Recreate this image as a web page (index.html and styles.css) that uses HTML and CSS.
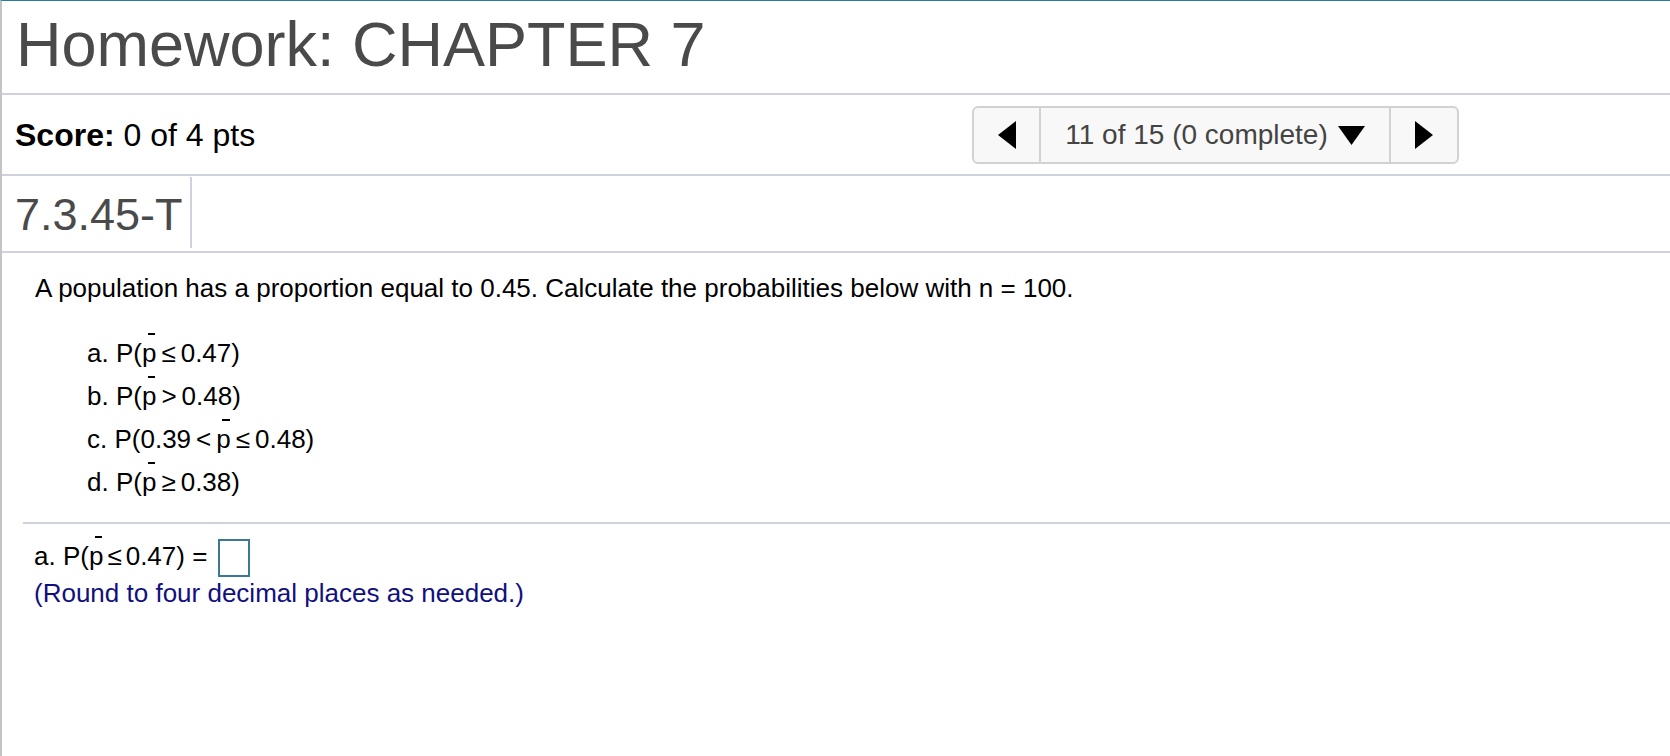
FILE: index.html
```html
<!DOCTYPE html>
<html lang="en">
<head>
    <meta charset="UTF-8">
    <meta name="viewport" content="width=device-width, initial-scale=1.0">
    <title>Homework: CHAPTER 7</title>
    <link rel="stylesheet" href="styles.css">
</head>
<body>
    <div class="page">
        <header class="title-bar">
            <h1>Homework: CHAPTER 7</h1>
        </header>

        <div class="score-row">
            <div class="score"><b>Score:</b> 0 of 4 pts</div>
            <div class="nav">
                <div class="nav-btn prev">
                    <svg width="18" height="28" viewBox="0 0 18 28"><polygon points="18,0 18,28 0,14" fill="#000"/></svg>
                </div>
                <div class="nav-mid">
                    <span>11 of 15 (0 complete)</span>
                    <svg width="27" height="19" viewBox="0 0 27 19"><polygon points="0,0 27,0 13.5,19" fill="#000"/></svg>
                </div>
                <div class="nav-btn next">
                    <svg width="18" height="28" viewBox="0 0 18 28"><polygon points="0,0 18,14 0,28" fill="#000"/></svg>
                </div>
            </div>
        </div>

        <div class="qid-row">
            <div class="qid">7.3.45-T</div>
        </div>

        <div class="question">
            <p class="prompt">A population has a proportion equal to 0.45. Calculate the probabilities below with n = 100.</p>
            <ul class="parts">
                <li>a. P(<span class="pbar">p</span><span class="op">≤</span>0.47)</li>
                <li>b. P(<span class="pbar">p</span><span class="op">&gt;</span>0.48)</li>
                <li>c. P(0.39<span class="op">&lt;</span><span class="pbar">p</span><span class="op">≤</span>0.48)</li>
                <li>d. P(<span class="pbar">p</span><span class="op">≥</span>0.38)</li>
            </ul>
        </div>

        <div class="answer">
            <div class="answer-line">a. P(<span class="pbar">p</span><span class="op">≤</span>0.47) = <span class="answer-box"></span></div>
            <div class="hint">(Round to four decimal places as needed.)</div>
        </div>
    </div>
</body>
</html>
```

FILE: styles.css
```css
body {
    margin: 0;
    font-family: "Liberation Sans", Arial, Helvetica, sans-serif;
    background-color: #fff;
    color: #000;
}
.page {
    min-height: 756px;
    box-sizing: border-box;
    border-top: 1px solid #2c7c9b;
    border-left: 2px solid #c4c4c4;
}
.title-bar {
    padding: 12px 14px 17px;
    border-bottom: 2px solid #cfd2dc;
}
.title-bar h1 {
    margin: 0;
    font-size: 63px;
    line-height: 63px;
    font-weight: normal;
    color: #4a4a4a;
}
.score-row {
    display: flex;
    align-items: center;
    box-sizing: border-box;
    height: 81px;
    padding-left: 13px;
    border-bottom: 2px solid #cfd2dc;
}
.score {
    font-size: 32px;
    line-height: 32px;
}
.nav {
    display: flex;
    height: 58px;
    box-sizing: border-box;
    margin-left: auto;
    margin-right: 211px;
    border: 2px solid #d2d2d2;
    border-radius: 6px;
    background-color: #f8f8f8;
}
.nav-btn {
    display: flex;
    align-items: center;
    justify-content: center;
}
.nav-btn.prev {
    width: 65px;
    border-right: 2px solid #d2d2d2;
}
.nav-btn.next {
    width: 66px;
}
.nav-mid {
    display: flex;
    align-items: center;
    justify-content: center;
    gap: 10px;
    width: 348px;
    border-right: 2px solid #d2d2d2;
    font-size: 28px;
    color: #444;
}
.nav-mid svg {
    margin-top: 2px;
}
.qid-row {
    display: flex;
    height: 77px;
    box-sizing: border-box;
    border-bottom: 2px solid #cfd2dc;
}
.qid {
    margin: 1px 0 3px;
    padding: 4px 7px 0 13px;
    border-right: 2px solid #cfd2dc;
    font-size: 45px;
    line-height: 67px;
    color: #4a4a4a;
}
.question {
    padding: 20px 0 0 33px;
}
.prompt {
    margin: 0;
    font-size: 26px;
    line-height: 30px;
}
.parts {
    list-style: none;
    margin: 29px 0 0;
    padding-left: 52px;
    font-size: 26px;
    line-height: 43px;
}
.pbar {
    position: relative;
}
.pbar::after {
    content: "";
    position: absolute;
    left: 0.24em;
    top: -0.18em;
    width: 0.28em;
    height: 2px;
    background-color: currentColor;
}
.op {
    margin: 0 5px;
}
.answer {
    margin: 18px 0 0 21px;
    padding: 12px 0 0 11px;
    border-top: 2px solid #cfd2dc;
}
.answer-line {
    font-size: 26px;
    line-height: 40px;
}
.answer-line .op {
    margin: 0 4px;
}
.answer-box {
    display: inline-block;
    box-sizing: border-box;
    width: 32px;
    height: 38px;
    margin-left: 3px;
    vertical-align: middle;
    border: 2px solid #3a7893;
    background-color: #fff;
}
.hint {
    font-size: 26px;
    line-height: 32px;
    color: #10107e;
}
```
